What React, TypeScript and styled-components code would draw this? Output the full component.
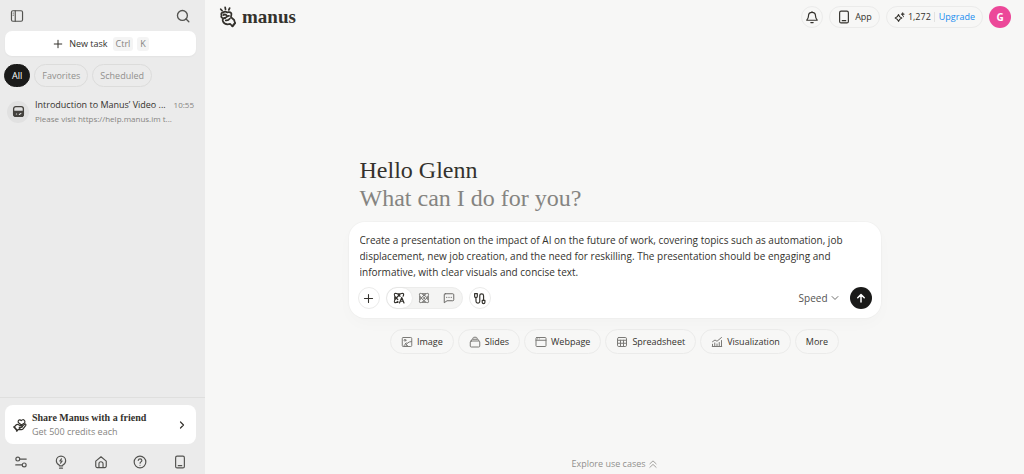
import React, { useState } from "react";
import styled, { createGlobalStyle } from "styled-components";

const sans = `"Open Sans", "Noto Sans", sans-serif`;
const serif = `"Liberation Serif", serif`;

const GlobalStyle = createGlobalStyle`
  *, *::before, *::after { box-sizing: border-box; }
  body { margin: 0; background: #f7f7f6; color: #34322d; font-family: ${sans}; font-size: 10px; line-height: 16px; }
  button, textarea { font: inherit; color: inherit; }
  button { padding: 0; border: 0; background: none; cursor: pointer; }
`;

/* ---------- icons ---------- */

const Svg = styled.svg<{ $size: number }>`
  display: block;
  flex: none;
  width: ${(p) => p.$size}px;
  height: ${(p) => p.$size}px;
  fill: none;
  stroke: currentColor;
  stroke-linecap: round;
  stroke-linejoin: round;
`;

type IconProps = { size?: number; weight?: number; children: React.ReactNode };

const Icon = ({ size = 14, weight = 2, children }: IconProps) => (
  <Svg $size={size} viewBox="0 0 24 24" strokeWidth={weight} aria-hidden="true">
    {children}
  </Svg>
);

const PanelIcon = () => (
  <Icon size={14}>
    <rect x="2.5" y="3" width="19" height="18" rx="2.5" />
    <path d="M9 3v18M5.500 7v.01M5.500 10.500v.01" />
  </Icon>
);
const SearchIcon = () => (
  <Icon size={14} weight={2.3}>
    <circle cx="11" cy="11" r="8.500" />
    <path d="m17.200 17.200 4.800 4.800" />
  </Icon>
);
const PlusIcon = ({ size = 12 }: { size?: number }) => (
  <Icon size={size}>
    <path d="M12 4.500v15M4.500 12h15" />
  </Icon>
);
const DriveIcon = () => (
  <Icon size={13} weight={2.4}>
    <rect x="3" y="3" width="18" height="18" rx="4" />
    <path d="M3 12h18v5a4 4 0 0 1-4 4H7a4 4 0 0 1-4-4z" fill="currentColor" />
    <path d="M8 16.500h.5M13.500 17.500l3-2" stroke="#e1e1e1" strokeWidth="2" />
  </Icon>
);
const ShareIcon = () => (
  <Icon size={14} weight={2}>
    <path d="M14.500 12 9.500 8.200c-1.600-1.900-.4-4.600 1.800-4.900 1.200-.1 2.200.3 2.900 1.200 1.200-1.700 3.400-2.100 4.900-.9 1.800 1.500 1.700 4.200-.1 5.500z" />
    <path d="M2 15.500 5.200 12c1.300-1.300 3-1.300 4.500-.4l2 1.400h3c2 0 2 2.700 0 2.900l-4 .2" />
    <path d="m15.800 14.300 3.900-3.600c1.400-1.200 3.200.5 2.200 1.900l-4.600 6c-.8 1-1.700 1.400-3 1.400H8.500L6 22.500z" />
    <path d="m2 15.500 5 6" strokeWidth="3" />
  </Icon>
);
const ChevronRightIcon = () => (
  <Icon size={12} weight={2.4}>
    <path d="m9 6 6 6-6 6" />
  </Icon>
);
const SlidersIcon = () => (
  <Icon size={14}>
    <circle cx="6.500" cy="7" r="3.300" />
    <path d="M10 7h11" />
    <circle cx="17.500" cy="17" r="3.300" />
    <path d="M3 17h11" />
  </Icon>
);
const BulbIcon = () => (
  <Icon size={14}>
    <path d="M9 18.500v-1.300C5.800 15.700 4 13 4 9.800a8 8 0 0 1 16 0c0 3.200-1.800 5.900-5 7.400v1.300z" />
    <path d="M9.500 22.500h5" />
    <path d="M12.800 6.500 10 10.300h4l-2.800 3.700" />
  </Icon>
);
const HomeIcon = () => (
  <Icon size={14}>
    <path d="M3 10.500 12 3l9 7.500V19a2.500 2.500 0 0 1-2.500 2.500h-13A2.500 2.500 0 0 1 3 19z" />
    <path d="M8.500 21v-6a3.500 3.500 0 0 1 7 0v6" />
  </Icon>
);
const HelpIcon = () => (
  <Icon size={14}>
    <circle cx="12" cy="12" r="10" />
    <path d="M9 9.300c.3-1.700 1.500-2.600 3.100-2.600 1.800 0 3.100 1.100 3.100 2.700 0 2.300-3.100 2.500-3.100 4.600M12 17.500v.01" />
  </Icon>
);
const PhoneIcon = () => (
  <Icon size={14}>
    <rect x="4.500" y="2" width="15" height="20" rx="2.500" />
    <path d="M9 18.300h6" />
  </Icon>
);
const BellIcon = () => (
  <Icon size={14}>
    <path d="M6 10a6 6 0 0 1 12 0c0 4 1 5.500 3 7.500H3c2-2 3-3.500 3-7.500zM12 2.500V4M10 21.500h4" />
  </Icon>
);
const SparkIcon = () => (
  <Icon size={11} weight={2.4}>
    <path d="M10 5.500c1 4.500 2.500 6 7 7.500-4.500 1.500-6 3-7 7.500-1.500-4.500-3-6-7.500-7.500 4.500-1.500 6-3 7.500-7.500zM19 2v5.500M16.300 4.700h5.500M20.500 10v.01" />
  </Icon>
);
const AgentIcon = () => (
  <Icon size={12}>
    <path d="M12 6.500C9 3 4.500 2 3.300 3.300S3.500 9 6.500 12c-3 3-4.400 7.400-3.200 8.700S9 21 12 17.500c3 3.500 7.500 4.500 8.700 3.200s-.2-5.700-3.200-8.700c3-3 4.400-7.400 3.200-8.700S15 3 12 6.500z" />
    <path d="M12 6.500 6.500 12l5.500 5.500 5.500-5.500zM9 3.500h6M9 20.500h6M3.500 9v6M20.500 9v6" />
    <circle cx="12" cy="12" r="1" />
  </Icon>
);
const AdaptiveIcon = () => (
  <Icon size={12} weight={2.4}>
    <path d="M12 6.500C9 3 4.500 2 3.300 3.300S3.500 9 6.500 12c-3 3-4.400 7.400-3.200 8.700s4 .3 6.500-1.500M12 6.500c3-3.500 7.500-4.500 8.700-3.200.7.8.5 3-.5 5.200M12 6.500 6.500 12l3 3M9 3.500h6M3.500 9v6M12 6.500l2 2M8.500 20.700h1.500" />
    <path d="m13 22 4.500-11L22 22M14.500 18.500h6" />
  </Icon>
);
const ChatIcon = () => (
  <Icon size={12}>
    <path d="M4.500 3.500h15a2 2 0 0 1 2 2v10a2 2 0 0 1-2 2H8l-5.500 4v-16a2 2 0 0 1 2-2z" />
    <path d="M7.500 10.500v.01M12 10.500v.01M16.500 10.500v.01" strokeWidth="2.500" />
  </Icon>
);
const ConnectIcon = () => (
  <Icon size={13} weight={2.2}>
    <path d="M3 3h5v5a2.500 2.500 0 0 1-5 0zM5.500 11v6a3.500 3.500 0 0 0 7 0V7a3.500 3.500 0 0 1 7 0v8M17 15.500h5V19a2.500 2.500 0 0 1-5 0z" />
  </Icon>
);
const ChevronDownIcon = () => (
  <Icon size={10}>
    <path d="m5 8.500 7 7 7-7" />
  </Icon>
);
const ArrowUpIcon = () => (
  <Icon size={12} weight={3}>
    <path d="M12 20v-15M5.500 11.500 12 5l6.500 6.500" />
  </Icon>
);
const ImageIcon = () => (
  <Icon size={12}>
    <rect x="2.500" y="3" width="19" height="18" rx="2" />
    <circle cx="8" cy="8.500" r="1.800" />
    <path d="m5 20.500 6-7M10 20.500c0-5 4-9 11-9.500M8.500 14.500l5.500 6" />
  </Icon>
);
const SlidesIcon = () => (
  <Icon size={12}>
    <rect x="2.500" y="10" width="19" height="12" rx="2" />
    <path d="M4.500 9.500c0-2 1-3 2.500-3h10c1.500 0 2.500 1 2.500 3M7.500 6c0-2 1-3.500 2.500-3.500h4c1.500 0 2.500 1.500 2.500 3.500" />
  </Icon>
);
const WebpageIcon = () => (
  <Icon size={12}>
    <rect x="2" y="3" width="20" height="18" rx="1.500" />
    <path d="M2 8.500h20M5 5.800h.01M8.500 5.800h.01" />
  </Icon>
);
const SheetIcon = () => (
  <Icon size={12}>
    <rect x="3" y="3" width="18" height="18" rx="2.500" />
    <path d="M3 8.500h18M3 14.500h18M9 8.500V21M15 8.500V21" />
  </Icon>
);
const ChartIcon = () => (
  <Icon size={12}>
    <path d="M3 11.500 8 8l4 2.500 9-7.500M3 20.500v-4M7.500 20.500V14M12 20.500V16M16.500 20.500V13M21 20.500V9M2.500 21h19" />
  </Icon>
);
const ChevronsUpIcon = () => (
  <Icon size={10}>
    <path d="m4.500 11.500 7.500-7 7.500 7M4.500 20l7.500-7 7.500 7" />
  </Icon>
);
const HandIcon = () => (
  <Icon size={22} weight={1.9}>
    <path d="M4.500 5.200 3 3.500M8.200 3.700 7.800 1.500M11.800 4.300l.9-2" />
    <path d="M6 13.500c-2.500-.5-3-2-2-3.300C2.800 8.500 4 7 5.700 7.300c.9-1.500 3-1.400 4.200-.2l1.300-.4c2.800-.5 4 1.500 3.300 3.200l-.4 2.300 3.500 3.100 1 3.400-2.800 3.500-2.400-2.600c-3.600.8-7-.3-8-2.800-1-2 .2-3.500 2.400-3.600z" />
    <path d="M6 9.800c1-.8 2.300-.5 3.200.2M7 13c2.500-.3 2.500-2.500 5-2.300M8.500 15.700c2 .4 3.500-.7 4.500-2M15.800 22l2.800-3.500" />
  </Icon>
);

/* ---------- sidebar ---------- */

const Page = styled.div`
  display: flex;
  min-height: 100vh;
`;
const Sidebar = styled.aside`
  display: flex;
  flex-direction: column;
  flex: 0 0 205px;
  min-width: 0;
  background: #ebebeb;
`;
const SidebarTop = styled.div`
  display: flex;
  align-items: center;
  justify-content: space-between;
  padding: 8px 15px 7px 10px;
`;
const IconButton = styled.button`
  display: grid;
  place-items: center;
  height: 16px;
  min-width: 14px;
  color: #535350;
`;
const NewTask = styled.button`
  display: flex;
  align-items: center;
  justify-content: center;
  gap: 4px;
  height: 25px;
  margin: 0 9px 0 5px;
  border-radius: 7px;
  background: #fff;
  box-shadow: 0 1px 2px rgba(0, 0, 0, 0.04);
  font-size: 9px;
  font-weight: 500;
`;
const NewTaskLabel = styled.span`
  margin: 0 1px;
`;
const Key = styled.kbd`
  padding: 0 3px;
  border-radius: 3px;
  background: #f4f4f4;
  color: #858481;
  font: inherit;
  font-weight: 400;
  line-height: 14px;
`;
const Filters = styled.div`
  display: flex;
  gap: 4px;
  padding: 8px 4px 9px;
`;
const Filter = styled.button<{ $active: boolean }>`
  height: 23px;
  padding: 0 7px;
  border: 1px solid ${(p) => (p.$active ? "#1a1a19" : "#dcdcdb")};
  border-radius: 12px;
  background: ${(p) => (p.$active ? "#1a1a19" : "transparent")};
  color: ${(p) => (p.$active ? "#fff" : "#91908d")};
  font-size: 9px;
`;
const TaskLink = styled.a`
  display: flex;
  align-items: center;
  gap: 6px;
  padding: 2px 11px 2px 7px;
  color: inherit;
  text-decoration: none;
`;
const TaskBadge = styled.span`
  display: grid;
  place-items: center;
  flex: none;
  width: 22px;
  height: 22px;
  border-radius: 50%;
  background: #e1e1e1;
  color: #44423e;
`;
const TaskBody = styled.span`
  flex: 1;
  min-width: 0;
`;
const TaskLine = styled.span`
  display: flex;
  justify-content: space-between;
  gap: 4px;
  font-size: 9px;
  font-weight: 500;
  line-height: 14px;
  white-space: nowrap;
`;
const Faint = styled.span`
  color: #858481;
  font-size: 8px;
  font-weight: 400;
`;
const TaskNote = styled(Faint)`
  display: block;
  line-height: 13px;
  white-space: nowrap;
`;
const SidebarBottom = styled.div`
  margin-top: auto;
  padding: 7px 9px 4px 5px;
  border-top: 1px solid #dfdfde;
`;
const ShareCard = styled.button`
  display: flex;
  align-items: center;
  gap: 5px;
  width: 100%;
  height: 39px;
  padding: 0 8px;
  border-radius: 8px;
  background: #fff;
  text-align: left;
`;
const ShareText = styled.span`
  flex: 1;
`;
const ShareTitle = styled.span`
  display: block;
  font: bold 10px/14px ${serif};
`;
const ShareNote = styled.span`
  display: block;
  color: #858481;
  font-size: 9px;
  line-height: 14px;
`;
const IconNav = styled.nav`
  display: flex;
  justify-content: space-between;
  padding: 10px 9px 0;
`;

/* ---------- main area ---------- */

const Main = styled.main`
  display: flex;
  flex: 1;
  flex-direction: column;
  min-width: 0;
`;
const Header = styled.header`
  display: flex;
  align-items: center;
  justify-content: space-between;
  padding: 6px 13px 0;
`;
const Logo = styled.a`
  display: flex;
  align-items: center;
  gap: 2px;
  color: #34322d;
  font: bold 19px/22px ${serif};
  text-decoration: none;
`;
const Actions = styled.div`
  display: flex;
  align-items: center;
  gap: 6px;
`;
const Pill = styled.button<{ $height?: number; $pad?: number; $gap?: number }>`
  display: flex;
  align-items: center;
  justify-content: center;
  gap: ${(p) => p.$gap ?? 4}px;
  height: ${(p) => p.$height ?? 22}px;
  min-width: 22px;
  padding: 0 ${(p) => p.$pad ?? 7}px;
  border: 1px solid #ebebea;
  border-radius: 13px;
  font-size: 9px;
  font-weight: 500;
`;
const Upgrade = styled.span`
  padding-left: 4px;
  border-left: 1px solid #e2e2e1;
  color: #1a8df0;
  font-weight: 400;
  line-height: 10px;
`;
const Avatar = styled.button`
  width: 22px;
  height: 22px;
  border-radius: 50%;
  background: #ec4899;
  color: #fff;
  font-weight: 700;
`;
const Center = styled.section`
  width: 100%;
  max-width: 532px;
  margin: 0 auto;
  padding-top: 128px;
`;
const Greeting = styled.h1`
  margin: 0 0 10px;
  padding-left: 11px;
  font: 24px/28px ${serif};
`;
const Question = styled.span`
  display: block;
  color: #858481;
`;
const Composer = styled.form`
  padding: 10px 9px 9px 11px;
  border-radius: 16px;
  background: #fff;
  box-shadow: 0 0 0 1px rgba(0, 0, 0, 0.02), 0 6px 16px rgba(0, 0, 0, 0.02);
`;
const Prompt = styled.textarea`
  display: block;
  width: 100%;
  height: 48px;
  margin-bottom: 7px;
  padding: 0 16px 0 0;
  border: 0;
  outline: 0;
  background: none;
  resize: none;
  overflow: hidden;
`;
const Toolbar = styled.div`
  display: flex;
  align-items: center;
  gap: 6px;
  margin-left: -2px;
`;
const ModeGroup = styled.div`
  display: flex;
  height: 22px;
  border: 1px solid #ececeb;
  border-radius: 11px;
  background: #f4f4f3;
`;
const Mode = styled.button<{ $active: boolean }>`
  display: grid;
  place-items: center;
  width: 25px;
  border-radius: 10px;
  background: ${(p) => (p.$active ? "#fff" : "transparent")};
  box-shadow: ${(p) => (p.$active ? "0 0 2px rgba(0, 0, 0, 0.1)" : "none")};
  color: ${(p) => (p.$active ? "#34322d" : "#6b6a67")};
`;
const Speed = styled.button`
  display: flex;
  align-items: center;
  gap: 2px;
  margin: 0 4px 0 auto;
  color: #535350;
`;
const Send = styled.button`
  display: grid;
  place-items: center;
  width: 22px;
  height: 22px;
  border-radius: 50%;
  background: #1a1a19;
  color: #fff;
`;
const Suggestions = styled.div`
  display: flex;
  justify-content: center;
  gap: 4px;
  padding: 11px 0;
`;
const Tint = styled.span`
  color: #7b7a77;
`;
const Explore = styled.button`
  display: flex;
  align-items: center;
  align-self: center;
  gap: 2px;
  margin-top: auto;
  padding-bottom: 2px;
  color: #91908d;
  font-size: 9px;
`;

const filters = ["All", "Favorites", "Scheduled"];
const shortcuts = [
  { label: "Settings", icon: <SlidersIcon /> },
  { label: "Knowledge", icon: <BulbIcon /> },
  { label: "Home", icon: <HomeIcon /> },
  { label: "Help", icon: <HelpIcon /> },
  { label: "Mobile app", icon: <PhoneIcon /> },
];
const modes = [
  { label: "Adaptive", icon: <AdaptiveIcon /> },
  { label: "Agent", icon: <AgentIcon /> },
  { label: "Chat", icon: <ChatIcon /> },
];
const suggestions = [
  { label: "Image", icon: <ImageIcon /> },
  { label: "Slides", icon: <SlidesIcon /> },
  { label: "Webpage", icon: <WebpageIcon /> },
  { label: "Spreadsheet", icon: <SheetIcon /> },
  { label: "Visualization", icon: <ChartIcon /> },
  { label: "More", icon: null },
];

export default function App() {
  const [filter, setFilter] = useState("All");
  const [mode, setMode] = useState("Adaptive");
  const [prompt, setPrompt] = useState(
    "Create a presentation on the impact of AI on the future of work, covering topics such as automation, job displacement, new job creation, and the need for reskilling. The presentation should be engaging and informative, with clear visuals and concise text."
  );

  return (
    <>
      <GlobalStyle />
      <Page>
        <Sidebar>
          <SidebarTop>
            <IconButton aria-label="Toggle sidebar"><PanelIcon /></IconButton>
            <IconButton aria-label="Search"><SearchIcon /></IconButton>
          </SidebarTop>
          <NewTask>
            <PlusIcon />
            <NewTaskLabel>New task</NewTaskLabel>
            <Key>Ctrl</Key>
            <Key>K</Key>
          </NewTask>
          <Filters>
            {filters.map((name) => (
              <Filter key={name} $active={name === filter} onClick={() => setFilter(name)}>
                {name}
              </Filter>
            ))}
          </Filters>
          <TaskLink href="#task">
            <TaskBadge><DriveIcon /></TaskBadge>
            <TaskBody>
              <TaskLine>
                <span>Introduction to Manus’ Video ...</span>
                <Faint>10:55</Faint>
              </TaskLine>
              <TaskNote>Please visit https://help.manus.im t...</TaskNote>
            </TaskBody>
          </TaskLink>
          <SidebarBottom>
            <ShareCard>
              <ShareIcon />
              <ShareText>
                <ShareTitle>Share Manus with a friend</ShareTitle>
                <ShareNote>Get 500 credits each</ShareNote>
              </ShareText>
              <ChevronRightIcon />
            </ShareCard>
            <IconNav>
              {shortcuts.map((s) => (
                <IconButton key={s.label} aria-label={s.label}>{s.icon}</IconButton>
              ))}
            </IconNav>
          </SidebarBottom>
        </Sidebar>

        <Main>
          <Header>
            <Logo href="#home"><HandIcon />manus</Logo>
            <Actions>
              <Pill $pad={0} aria-label="Notifications"><BellIcon /></Pill>
              <Pill><PhoneIcon />App</Pill>
              <Pill $gap={3}><SparkIcon />1,272<Upgrade>Upgrade</Upgrade></Pill>
              <Avatar>G</Avatar>
            </Actions>
          </Header>

          <Center>
            <Greeting>
              Hello Glenn
              <Question>What can I do for you?</Question>
            </Greeting>
            <Composer onSubmit={(e) => e.preventDefault()}>
              <Prompt aria-label="Task prompt" value={prompt} onChange={(e) => setPrompt(e.target.value)} />
              <Toolbar>
                <Pill type="button" $pad={0} aria-label="Attach"><PlusIcon size={13} /></Pill>
                <ModeGroup>
                  {modes.map((m) => (
                    <Mode key={m.label} type="button" aria-label={m.label} $active={m.label === mode} onClick={() => setMode(m.label)}>
                      {m.icon}
                    </Mode>
                  ))}
                </ModeGroup>
                <Pill type="button" $pad={0} aria-label="Connectors"><ConnectIcon /></Pill>
                <Speed type="button">Speed<ChevronDownIcon /></Speed>
                <Send aria-label="Send"><ArrowUpIcon /></Send>
              </Toolbar>
            </Composer>
            <Suggestions>
              {suggestions.map((s) => (
                <Pill key={s.label} $height={25} $pad={10}>
                  {s.icon && <Tint>{s.icon}</Tint>}
                  {s.label}
                </Pill>
              ))}
            </Suggestions>
          </Center>

          <Explore>Explore use cases<ChevronsUpIcon /></Explore>
        </Main>
      </Page>
    </>
  );
}
